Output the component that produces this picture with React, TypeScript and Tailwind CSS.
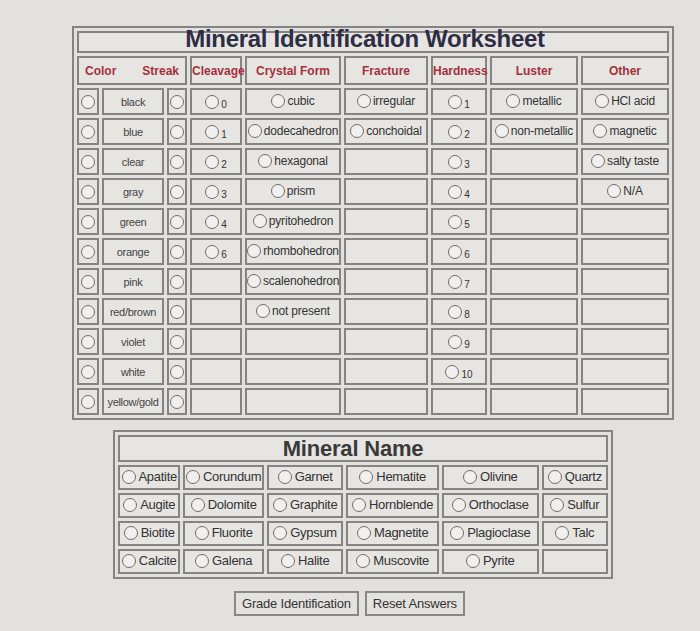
import React from "react";

const colors = ["black","blue","clear","gray","green","orange","pink","red/brown","violet","white","yellow/gold"];
const cleavage = ["0","1","2","3","4","6"];
const crystal = ["cubic","dodecahedron","hexagonal","prism","pyritohedron","rhombohedron","scalenohedron","not present"];
const fracture = ["irregular","conchoidal"];
const hardness = ["1","2","3","4","5","6","7","8","9","10"];
const luster = ["metallic","non-metallic"];
const other = ["HCl acid","magnetic","salty taste","N/A"];

const minerals = [
  ["Apatite","Corundum","Garnet","Hematite","Olivine","Quartz"],
  ["Augite","Dolomite","Graphite","Hornblende","Orthoclase","Sulfur"],
  ["Biotite","Fluorite","Gypsum","Magnetite","Plagioclase","Talc"],
  ["Calcite","Galena","Halite","Muscovite","Pyrite",""],
];

function Radio() {
  return <span className="inline-block w-[14px] h-[14px] rounded-full border border-[#6e6d6c] bg-[#f1f0ee] shrink-0" />;
}

const cell = "border-2 border-[#868482] bg-[#e7e5e2] p-0 text-center align-middle leading-[14px]";

function Opt({ label, small }: { label?: string; small?: boolean }) {
  if (label === undefined) return null;
  return (
    <span className="inline-flex items-center justify-center gap-[2px] whitespace-nowrap">
      <Radio />
      <span className={small ? "text-[10px] mt-[6px] text-[#333]" : "text-[12px] text-[#333] tracking-[-0.2px]"}>{label}</span>
    </span>
  );
}

export default function App() {
  return (
    <div className="min-h-[631px] w-[700px] bg-[#e3e1de] pt-[26px] font-['Liberation_Sans',Arial,sans-serif] text-[#333]">
      <table className="ml-[72px] w-[602px] table-fixed border-separate border-spacing-[3px] border-2 border-[#868482]">
        <colgroup>
          <col className="w-[22px]" />
          <col className="w-[62px]" />
          <col className="w-[20px]" />
          <col className="w-[52px]" />
          <col className="w-[96px]" />
          <col className="w-[84px]" />
          <col className="w-[56px]" />
          <col className="w-[88px]" />
          <col className="w-[88px]" />
        </colgroup>
        <tbody>
          <tr>
            <td colSpan={9} className={cell + " h-[22px]"}>
              <div className="h-[18px] leading-[12px] text-[24px] font-bold text-[#2d2d44] tracking-[-0.3px] pr-[16px]">
                Mineral Identification Worksheet
              </div>
            </td>
          </tr>
          <tr className="text-[12px] font-bold text-[#a5303c]">
            <td colSpan={3} className={cell + " h-[29px]"}>
              <div className="flex justify-between px-[6px]">
                <span>Color</span>
                <span>Streak</span>
              </div>
            </td>
            <td className={cell}>Cleavage</td>
            <td className={cell}>Crystal Form</td>
            <td className={cell}>Fracture</td>
            <td className={cell}>Hardness</td>
            <td className={cell}>Luster</td>
            <td className={cell}>Other</td>
          </tr>
          {colors.map((c, i) => (
            <tr key={c}>
              <td className={cell + " h-[27px]"}>
                <div className="flex justify-center"><Radio /></div>
              </td>
              <td className={cell + " text-[11px] text-[#444] tracking-[-0.3px] whitespace-nowrap"}>{c}</td>
              <td className={cell}>
                <div className="flex justify-center"><Radio /></div>
              </td>
              <td className={cell}><Opt label={cleavage[i]} small /></td>
              <td className={cell}><Opt label={crystal[i]} /></td>
              <td className={cell}><Opt label={fracture[i]} /></td>
              <td className={cell}><Opt label={hardness[i]} small /></td>
              <td className={cell}><Opt label={luster[i]} /></td>
              <td className={cell}><Opt label={other[i]} /></td>
            </tr>
          ))}
        </tbody>
      </table>

      <table className="ml-[113px] mt-[10px] w-[500px] table-fixed border-separate border-spacing-[3px] border-2 border-[#868482]">
        <colgroup>
          <col className="w-[62px]" />
          <col className="w-[80px]" />
          <col className="w-[76px]" />
          <col className="w-[92px]" />
          <col className="w-[96px]" />
          <col className="w-[66px]" />
        </colgroup>
        <tbody>
          <tr>
            <td colSpan={6} className={cell + " h-[27px]"}>
              <div className="text-[22px] leading-[22px] font-bold text-[#3a3a3a] tracking-[-0.2px] pr-[20px]">Mineral Name</div>
            </td>
          </tr>
          {minerals.map((row, r) => (
            <tr key={r}>
              {row.map((m, k) => (
                <td key={k} className={cell + " h-[25px]"}>
                  {m && (
                    <span className="inline-flex items-center gap-[3px] whitespace-nowrap">
                      <Radio />
                      <span className="text-[13px] text-[#333] tracking-[-0.3px]">{m}</span>
                    </span>
                  )}
                </td>
              ))}
            </tr>
          ))}
        </tbody>
      </table>

      <div className="ml-[234px] mt-[12px] flex gap-[6px]">
        <button className="h-[25px] px-[6px] border-2 border-[#8a8886] bg-[#e4e2df] text-[13px] text-[#333] tracking-[-0.2px]">
          Grade Identification
        </button>
        <button className="h-[25px] px-[6px] border-2 border-[#8a8886] bg-[#e4e2df] text-[13px] text-[#333] tracking-[-0.2px]">
          Reset Answers
        </button>
      </div>
    </div>
  );
}
